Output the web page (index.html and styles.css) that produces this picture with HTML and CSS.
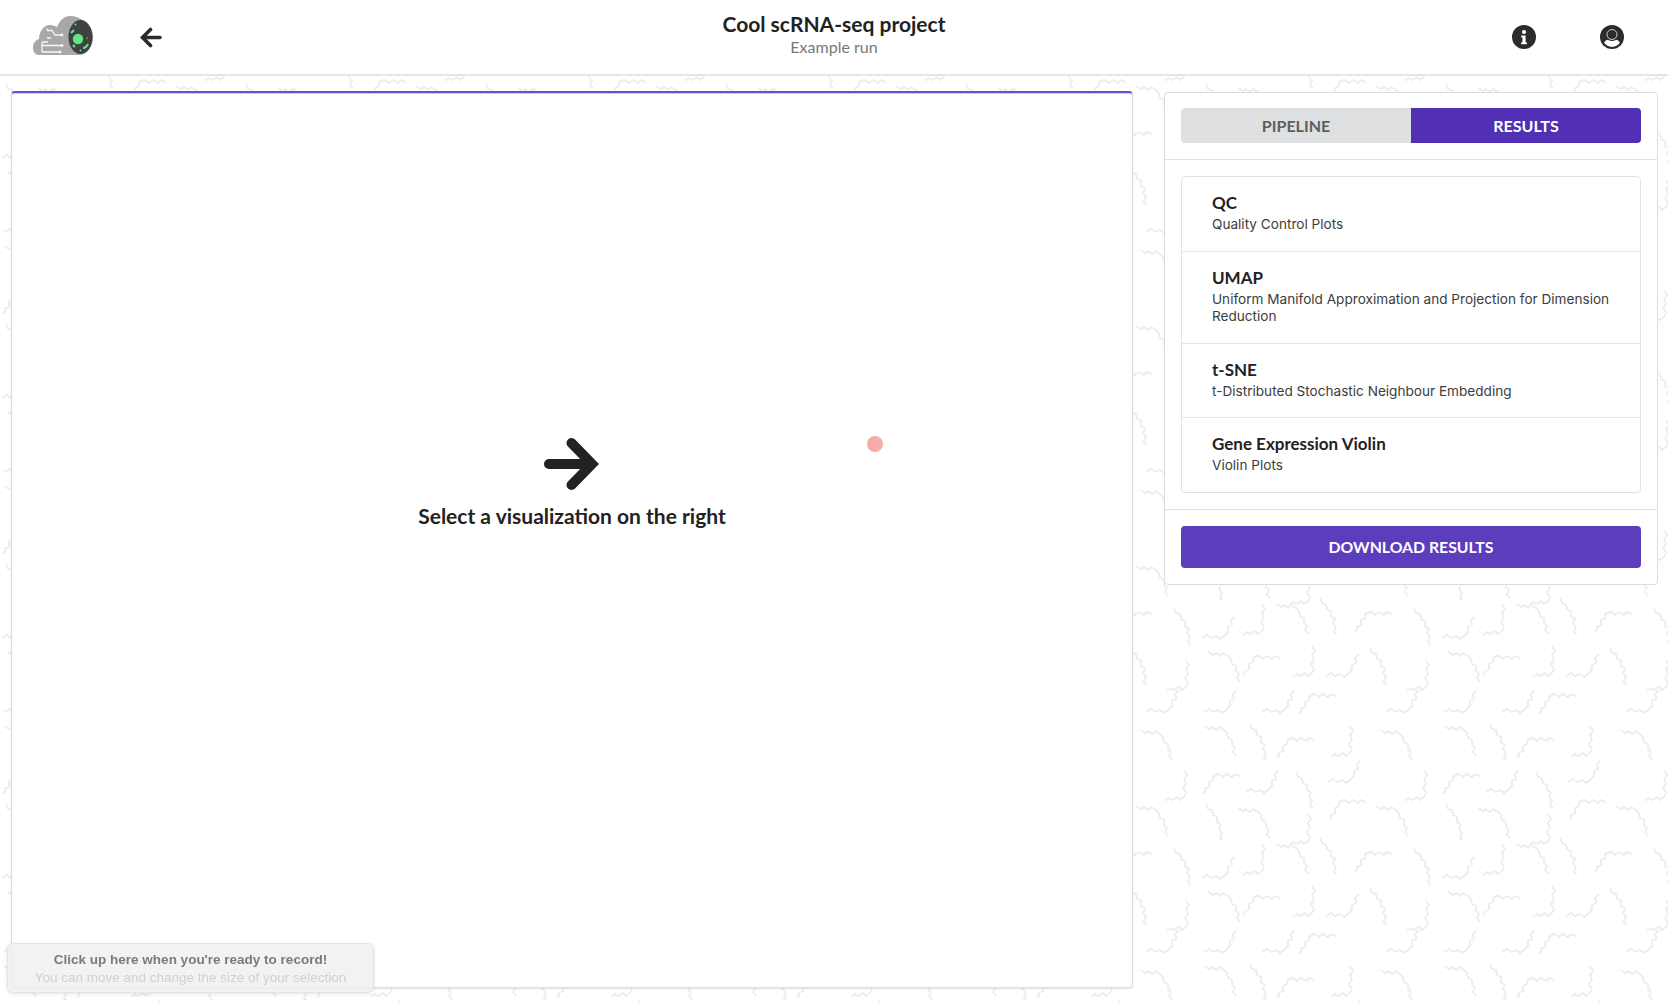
FILE: index.html
```html
<!DOCTYPE html>
<html lang="en">
<head>
    <meta charset="UTF-8">
    <meta name="viewport" content="width=device-width,initial-scale=1.0">
    <title>Cool scRNA-seq project</title>
    <link rel="stylesheet" href="styles.css">
</head>
<body>
    <header class="topbar">
        <div class="topbar-left">
            <svg class="logo" viewBox="0 0 60 40" width="60" height="40">
                <path fill="#a8a8a8" d="M6 39C2 39 0 36 0 31c0-4 3-7 6-8 0-6 4-14 11-14 3 0 5 1 7 2C27 4 31 0 37 0c6 0 10 2 14 5 5 4 9 9 9 16 0 10-6 18-14 18z"/>
                <ellipse fill="#3f4240" cx="47.500" cy="21" rx="12" ry="17"/>
                <g fill="none" stroke="#f6f6f6" stroke-width="1.300">
                    <path d="M14 14.500h5l3 4.500h7M14 22h4M9 29.500h20M9 36h18M9 26h6M9 26v10M14 14.500v-2"/>
                </g>
                <g fill="#f6f6f6">
                    <circle cx="29" cy="19" r="1.400"/>
                    <circle cx="29" cy="29.500" r="1.400"/>
                    <circle cx="27" cy="36" r="1.400"/>
                </g>
                <circle fill="#62e585" cx="45" cy="23" r="5.200"/>
                <g fill="none" stroke="#62e585" stroke-width="2">
                    <path d="M38 17l3-3M42 9l1-1M54 22l.5 .5M50 32c2 0 4-2 5-4M40 29l2 2M47 34l1 1"/>
                </g>
            </svg>
            <button class="icon-btn back-btn">
                <svg viewBox="0 0 22 21" width="22" height="21">
                    <path d="M20 10.500H3M10.500 2.500L2.500 10.500l8 8" fill="none" stroke="#2b2b2b" stroke-width="3.600" stroke-linecap="round"/>
                </svg>
            </button>
        </div>
        <div class="topbar-title">
            <h1>Cool scRNA-seq project</h1>
            <p>Example run</p>
        </div>
        <div class="topbar-right">
            <button class="icon-btn">
                <svg viewBox="0 0 24 24" width="24" height="24">
                    <circle cx="12" cy="12" r="12" fill="#2b2b2b"/>
                    <circle cx="12" cy="7" r="2.100" fill="#fff"/>
                    <path d="M9.200 10.400h4.400v6.800h1.200v2.100H9.200v-2.100h1.300v-4.700H9.200z" fill="#fff"/>
                </svg>
            </button>
            <button class="icon-btn">
                <svg viewBox="0 0 24 24" width="24" height="24">
                    <circle cx="12" cy="12" r="12" fill="#2b2b2b"/>
                    <path d="M4 17.600c1.500-2.200 3-2.800 4-2.800 1.100 .8 2.500 1.200 4 1.200s2.900-.4 4-1.200c1 0 2.500 .6 4 2.800-1.700 2.700-4.700 4.400-8 4.400s-6.300-1.700-8-4.400z" fill="#fff"/>
                    <circle cx="12" cy="9.500" r="5" fill="#2b2b2b" stroke="#cfcfcf" stroke-width="1"/>
                </svg>
            </button>
        </div>
    </header>

    <main class="layout">
        <section class="viewer">
            <div class="pointer-dot"></div>
            <svg class="big-arrow" viewBox="0 0 56 54" width="56" height="54">
                <path d="M5 27h40" fill="none" stroke="#222" stroke-width="10" stroke-linecap="round"/>
                <path d="M27.500 6L48 27 27.500 48" fill="none" stroke="#222" stroke-width="10" stroke-linecap="round"/>
            </svg>
            <h2>Select a visualization on the right</h2>
        </section>

        <aside class="sidebar">
            <div class="sidebar-section">
                <div class="tabs">
                    <div class="tab">PIPELINE</div>
                    <div class="tab tab-active">RESULTS</div>
                </div>
            </div>
            <div class="sidebar-section">
                <ul class="result-list">
                    <li>
                        <h3>QC</h3>
                        <p>Quality Control Plots</p>
                    </li>
                    <li>
                        <h3>UMAP</h3>
                        <p>Uniform Manifold Approximation and Projection for Dimension Reduction</p>
                    </li>
                    <li>
                        <h3>t-SNE</h3>
                        <p>t-Distributed Stochastic Neighbour Embedding</p>
                    </li>
                    <li>
                        <h3>Gene Expression Violin</h3>
                        <p>Violin Plots</p>
                    </li>
                </ul>
            </div>
            <div class="sidebar-section">
                <button class="download-btn">DOWNLOAD RESULTS</button>
            </div>
        </aside>
    </main>

    <div class="record-hint">
        <strong>Click up here when you're ready to record!</strong>
        <span>You can move and change the size of your selection</span>
    </div>
</body>
</html>
```

FILE: styles.css
```css
*{
    margin: 0;
    padding: 0;
    box-sizing: border-box;
}
html, body{
    height: 100%;
}
body{
    font-family: Lato, "Liberation Sans", sans-serif;
    color: #222;
    overflow: hidden;
    background-color: #fff;
    background-image: url("data:image/svg+xml,%3Csvg xmlns='http://www.w3.org/2000/svg' width='240' height='240' fill='none' stroke='%23eeeeee' stroke-width='2' shape-rendering='crispEdges'%3E%3Cdefs%3E%3Cpath id='a' d='M0 0l5 3 3-2 4 3 3-3 5 3 3 3 1 5 4 2 0 5 3 3-2 4 3 4'/%3E%3Cpath id='b' d='M0 0l1-5 4-2 0-5 4-2 1-5 5-1 4 3 4-3 5 3 3-3 5 2'/%3E%3Cpath id='c' d='M0 0l3 5-3 4 2 5-3 4 3 5-2 4-4 3-3-3-5 3-3-2-4 3'/%3E%3Cpath id='d' d='M0 0l5-3 4 3 5-2 4 3 4-3 4-4 0-5 4-2-1-5 3-3'/%3E%3Cpath id='e' d='M0 0l2 5 4 1 1 5 4 2 0 5 4 3-2 4 3 4-2 5 3 3'/%3E%3C/defs%3E%3Cuse href='%23a' x='4' y='6'/%3E%3Cuse href='%23e' x='50' y='4'/%3E%3Cuse href='%23b' x='78' y='38'/%3E%3Cuse href='%23c' x='150' y='6'/%3E%3Cuse href='%23a' x='180' y='10'/%3E%3Cuse href='%23b' x='4' y='74'/%3E%3Cuse href='%23d' x='46' y='72'/%3E%3Cuse href='%23e' x='96' y='52'/%3E%3Cuse href='%23d' x='128' y='62'/%3E%3Cuse href='%23c' x='224' y='50'/%3E%3Cuse href='%23e' x='6' y='84'/%3E%3Cuse href='%23a' x='38' y='88'/%3E%3Cuse href='%23c' x='108' y='94'/%3E%3Cuse href='%23b' x='130' y='100'/%3E%3Cuse href='%23a' x='176' y='86'/%3E%3Cuse href='%23d' x='2' y='158'/%3E%3Cuse href='%23c' x='62' y='124'/%3E%3Cuse href='%23a' x='76' y='124'/%3E%3Cuse href='%23e' x='120' y='118'/%3E%3Cuse href='%23b' x='156' y='152'/%3E%3Cuse href='%23e' x='214' y='128'/%3E%3Cuse href='%23a' x='8' y='172'/%3E%3Cuse href='%23b' x='44' y='196'/%3E%3Cuse href='%23c' x='112' y='166'/%3E%3Cuse href='%23d' x='126' y='196'/%3E%3Cuse href='%23e' x='170' y='168'/%3E%3Cuse href='%23c' x='226' y='180'/%3E%3Cuse href='%23d' x='4' y='232'/%3E%3Cuse href='%23d' x='62' y='232'/%3E%3Cuse href='%23b' x='100' y='234'/%3E%3Cuse href='%23d' x='186' y='232'/%3E%3C/svg%3E");
}

/* top bar */
.topbar{
    height: 76px;
    background-color: #fff;
    border-bottom: 2px solid #e6e6e6;
    display: grid;
    grid-template-columns: 1fr auto 1fr;
    align-items: center;
    padding: 0 33px;
}
.topbar-left{
    display: flex;
    align-items: center;
    gap: 47px;
}
.topbar-right{
    display: flex;
    justify-content: flex-end;
    gap: 64px;
    margin-right: 11px;
}
.icon-btn{
    background: transparent;
    border: none;
    display: flex;
    cursor: pointer;
}
.logo{
    margin-top: -3px;
}
.back-btn{
    margin-top: 1px;
}
.topbar-title{
    text-align: center;
    padding-bottom: 6px;
}
.topbar-title h1{
    font-size: 21px;
    line-height: 26px;
    font-weight: 700;
    color: #222;
}
.topbar-title p{
    font-size: 16px;
    line-height: 20px;
    color: #777;
}

/* main area */
.layout{
    display: flex;
    align-items: flex-start;
    gap: 31px;
    padding: 15px 10px 0 11px;
}
.viewer{
    position: relative;
    width: 1122px;
    height: 897px;
    background-color: #fff;
    border: 1px solid #dedede;
    border-top: 2px solid #6a4fd0;
    border-radius: 4px;
    box-shadow: 0 1px 2px rgba(0,0,0,.12), inset 0 1px 0 #d5ccf3;
    display: flex;
    flex-direction: column;
    align-items: center;
    padding-top: 344px;
}
.viewer h2{
    font-size: 21px;
    line-height: 28px;
    font-weight: 700;
    color: #222;
    margin-top: 11px;
}
.pointer-dot{
    position: absolute;
    left: 855px;
    top: 343px;
    width: 16px;
    height: 16px;
    border-radius: 50%;
    background-color: #f8abab;
}

/* right panel */
.sidebar{
    width: 494px;
    margin-top: 1px;
    background-color: #fff;
    border: 1px solid #dcdcdc;
    border-radius: 4px;
}
.sidebar-section{
    padding: 16px;
    border-bottom: 1px solid #e2e2e2;
}
.sidebar-section:first-child{
    padding-top: 15px;
}
.sidebar-section:last-child{
    border-bottom: none;
}
.tabs{
    display: flex;
    height: 35px;
    border-radius: 4px;
    overflow: hidden;
}
.tab{
    flex: 1;
    display: flex;
    align-items: center;
    justify-content: center;
    background-color: #dfe0e1;
    color: #5c5f60;
    font-size: 16px;
    font-weight: 700;
}
.tab-active{
    background-color: #5130b5;
    color: #fff;
}
.result-list{
    list-style: none;
    border: 1px solid #e2e2e2;
    border-radius: 4px;
}
.result-list li{
    padding: 14px 30px 17px;
    border-bottom: 1px solid #e6e6e6;
}
.result-list li:last-child{
    border-bottom: none;
    padding-bottom: 17px;
}
.result-list h3{
    font-size: 17px;
    line-height: 24px;
    font-weight: 700;
    color: #222;
}
.result-list p{
    font-family: Inter, "Liberation Sans", sans-serif;
    font-size: 13.600px;
    line-height: 17.500px;
    color: #3c3c3c;
    margin-top: 1px;
}
.download-btn{
    display: block;
    width: 100%;
    height: 42px;
    background-color: #5b3dbd;
    color: #fff;
    border: none;
    border-radius: 4px;
    font-family: Lato, "Liberation Sans", sans-serif;
    font-size: 15.800px;
    font-weight: 700;
    cursor: pointer;
}

/* recorder hint, sits on top of everything */
.record-hint{
    position: fixed;
    left: 7px;
    top: 943px;
    width: 367px;
    height: 50px;
    border-radius: 6px;
    background-color: rgba(240,240,240,.85);
    border: 1px solid rgba(225,225,225,.8);
    box-shadow: 0 1px 4px rgba(0,0,0,.1);
    font-family: "Liberation Sans", sans-serif;
    display: flex;
    flex-direction: column;
    align-items: center;
    justify-content: center;
    gap: 2px;
    padding-top: 2px;
    font-size: 13.500px;
    line-height: 16px;
}
.record-hint strong{
    color: #7b7b7b;
}
.record-hint span{
    color: #d0d0d0;
}
```
